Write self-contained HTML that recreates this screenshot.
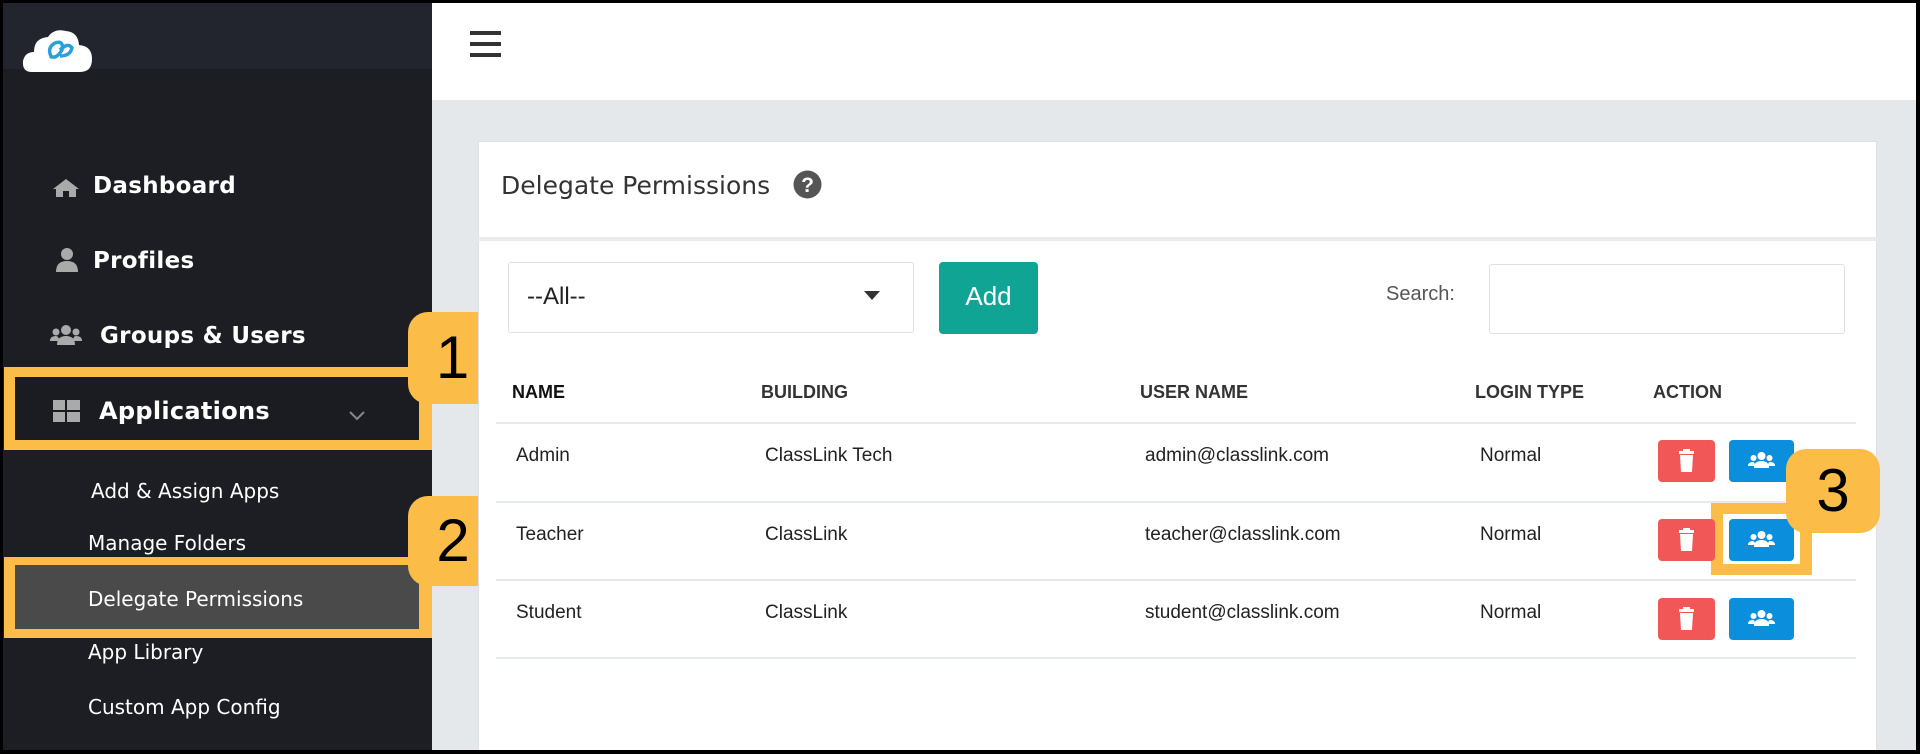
<!DOCTYPE html>
<html><head><meta charset="utf-8"><style>
*{margin:0;padding:0;box-sizing:border-box}
html,body{width:1920px;height:754px;overflow:hidden}
body{position:relative;background:#e5e8eb;font-family:"Liberation Sans",Arial,sans-serif}
.a{position:absolute}
.side{left:0;top:0;width:432px;height:754px;background:#1c1e24}
.logoarea{left:0;top:0;width:432px;height:69px;background:#22252d}
.nav{color:#fff;font-family:"DejaVu Sans","Liberation Sans",sans-serif;font-weight:bold;font-size:23px;letter-spacing:0.3px}
.sub{color:#fff;font-family:"DejaVu Sans","Liberation Sans",sans-serif;font-size:20px}
.th{font-weight:bold;font-size:18px;color:#333}
.td{font-size:19px;color:#222}
.line{height:2px;background:#e6e9ee;left:496px;width:1360px}
.badge{background:#fbbd47;border-radius:20px;font-size:60px;color:#000;text-align:center}
</style></head><body>
<div class="a side"></div>
<div class="a logoarea"></div>
<svg class="a" style="left:22px;top:26px" width="72" height="50" viewBox="0 0 72 50"><path d="M10 46 Q0 46 1 35 Q3 26 12 26 Q12 12 26 11 Q32 2 44 5 Q56 6 57 19 Q70 20 70 33 Q70 46 58 46 Z" fill="#fff"/><path d="M30 32 Q24 22 33 17 Q42 14 40 24 Q34 34 28 30 M38 24 Q46 16 50 22 Q48 30 38 30" stroke="#2aa0d8" stroke-width="3.5" fill="none"/></svg>
<div class="a" style="left:432px;top:0;width:1488px;height:100px;background:#fff"></div>
<div class="a" style="left:470px;top:31px;width:31px;height:4px;background:#333"></div>
<div class="a" style="left:470px;top:42px;width:31px;height:4px;background:#333"></div>
<div class="a" style="left:470px;top:53px;width:31px;height:4px;background:#333"></div>

<svg class="a" style="left:52px;top:178px" width="28" height="20" viewBox="0 0 28 20"><path d="M14 1 L1 11 L4 11 L4 19 L11 19 L11 13 L17 13 L17 19 L24 19 L24 11 L27 11 Z" fill="#aaa"/></svg>
<div class="a nav" style="left:93px;top:173px">Dashboard</div>
<svg class="a" style="left:55px;top:248px" width="24" height="24" viewBox="0 0 24 24"><circle cx="12" cy="6" r="6" fill="#aaa"/><path d="M1 24 Q1 13 12 13 Q23 13 23 24Z" fill="#aaa"/></svg>
<div class="a nav" style="left:93px;top:248px">Profiles</div>
<svg class="a" style="left:50px;top:325px" width="32" height="20" viewBox="0 0 32 20"><circle cx="16" cy="5" r="5" fill="#aaa"/><circle cx="6" cy="7" r="3.5" fill="#aaa"/><circle cx="26" cy="7" r="3.5" fill="#aaa"/><path d="M7 20 Q7 11 16 11 Q25 11 25 20Z M0 16 Q0 11 6 11 Q9 11 9 16Z M23 16 Q23 11 26 11 Q32 11 32 16Z" fill="#aaa"/></svg>
<div class="a nav" style="left:100px;top:323px">Groups &amp; Users</div>

<div class="a" style="left:4px;top:367px;width:428px;height:83px;background:#fbbd47"></div>
<div class="a" style="left:15px;top:377px;width:404px;height:63px;background:#1b1c21"></div>
<svg class="a" style="left:53px;top:400px" width="27" height="22" viewBox="0 0 27 22"><rect x="0" y="0" width="12" height="10" fill="#aaa"/><rect x="14" y="0" width="13" height="10" fill="#aaa"/><rect x="0" y="12" width="12" height="10" fill="#aaa"/><rect x="14" y="12" width="13" height="10" fill="#aaa"/></svg>
<div class="a nav" style="left:99px;top:397px;font-size:24px">Applications</div>
<svg class="a" style="left:349px;top:411px" width="16" height="10" viewBox="0 0 16 10"><path d="M1 1 L8 8 L15 1" stroke="#888" stroke-width="2" fill="none"/></svg>

<div class="a sub" style="left:91px;top:479px">Add &amp; Assign Apps</div>
<div class="a sub" style="left:88px;top:531px">Manage Folders</div>
<div class="a" style="left:4px;top:557px;width:428px;height:81px;background:#fbbd47"></div>
<div class="a" style="left:15px;top:565px;width:404px;height:64px;background:#4a4a4a"></div>
<div class="a sub" style="left:88px;top:587px">Delegate Permissions</div>
<div class="a sub" style="left:88px;top:640px">App Library</div>
<div class="a sub" style="left:88px;top:695px">Custom App Config</div>

<div class="a badge" style="left:408px;top:312px;width:89px;height:92px;line-height:92px">1</div>
<div class="a badge" style="left:408px;top:496px;width:90px;height:90px;line-height:90px">2</div>

<div class="a" style="left:478px;top:141px;width:1399px;height:613px;background:#fff;border:1px solid #dde1e5;border-bottom:none"></div>
<div class="a" style="left:501px;top:171px;color:#333;font-family:'DejaVu Sans','Liberation Sans',sans-serif;font-size:25px">Delegate Permissions</div>
<svg class="a" style="left:793px;top:170px" width="29" height="29" viewBox="0 0 29 29"><circle cx="14.5" cy="14.5" r="14" fill="#555"/><text x="14.5" y="22" text-anchor="middle" font-family="Liberation Sans" font-weight="bold" font-size="21" fill="#fff">?</text></svg>
<div class="a" style="left:478px;top:237px;width:1399px;height:4px;background:#ebebeb"></div>

<div class="a" style="left:508px;top:262px;width:406px;height:71px;border:1px solid #dde1e6;border-radius:3px"></div>
<div class="a" style="left:527px;top:283px;font-size:24px;color:#222">--All--</div>
<svg class="a" style="left:864px;top:291px" width="16" height="9" viewBox="0 0 16 9"><path d="M0 0 L16 0 L8 9Z" fill="#333"/></svg>
<div class="a" style="left:939px;top:262px;width:99px;height:72px;background:#0fa494;border-radius:4px;color:#fff;font-size:26px;text-align:center;line-height:68px">Add</div>
<div class="a" style="left:1386px;top:283px;font-size:20px;color:#555">Search:</div>
<div class="a" style="left:1489px;top:264px;width:356px;height:70px;border:1px solid #dde1e6;border-radius:3px"></div>

<div class="a th" style="left:512px;top:382px;color:#111">NAME</div>
<div class="a th" style="left:761px;top:382px">BUILDING</div>
<div class="a th" style="left:1140px;top:382px">USER NAME</div>
<div class="a th" style="left:1475px;top:382px">LOGIN TYPE</div>
<div class="a th" style="left:1653px;top:382px">ACTION</div>
<div class="a line" style="top:422px"></div>

<div class="a td" style="left:516px;top:445px">Admin</div>
<div class="a td" style="left:765px;top:445px">ClassLink Tech</div>
<div class="a td" style="left:1145px;top:445px">admin@classlink.com</div>
<div class="a td" style="left:1480px;top:445px">Normal</div>
<div class="a line" style="top:501px"></div>
<div class="a td" style="left:516px;top:524px">Teacher</div>
<div class="a td" style="left:765px;top:524px">ClassLink</div>
<div class="a td" style="left:1145px;top:524px">teacher@classlink.com</div>
<div class="a td" style="left:1480px;top:524px">Normal</div>
<div class="a line" style="top:579px"></div>
<div class="a td" style="left:516px;top:602px">Student</div>
<div class="a td" style="left:765px;top:602px">ClassLink</div>
<div class="a td" style="left:1145px;top:602px">student@classlink.com</div>
<div class="a td" style="left:1480px;top:602px">Normal</div>
<div class="a line" style="top:657px"></div>

<div class="a" style="left:1711px;top:503px;width:101px;height:72px;background:#fbbd47"></div>
<div class="a" style="left:1723px;top:514px;width:77px;height:50px;background:#fff"></div>
<svg class="a" style="left:0;top:0" width="1920" height="754" viewBox="0 0 1920 754">
<defs>
<g id="tr"><rect x="0" y="0" width="57" height="42" rx="4" fill="#f25757"/><rect x="21" y="11" width="15" height="3" fill="#fff"/><rect x="25" y="9" width="7" height="3" fill="#fff"/><path d="M22 15 L35 15 L34 32 L23 32Z" fill="#fff"/></g>
<g id="gr"><rect x="0" y="0" width="65" height="42" rx="4" fill="#0b8fdc"/><circle cx="32.5" cy="16" r="4" fill="#fff"/><circle cx="24.5" cy="18" r="3" fill="#fff"/><circle cx="40.5" cy="18" r="3" fill="#fff"/><path d="M25 28 Q25 21 32.5 21 Q40 21 40 28Z M19 26 Q19 22 24 22 Q26 22 26 26Z M39 26 Q39 22 41 22 Q46 22 46 26Z" fill="#fff"/></g>
</defs>
<use href="#tr" x="1658" y="440"/><use href="#gr" x="1729" y="440"/>
<use href="#tr" x="1658" y="519"/><use href="#gr" x="1729" y="519"/>
<use href="#tr" x="1658" y="598"/><use href="#gr" x="1729" y="598"/>
</svg>
<div class="a badge" style="left:1786px;top:449px;width:94px;height:84px;line-height:84px">3</div>

<div class="a" style="left:0;top:0;width:1920px;height:754px;border:3px solid #000;border-bottom-width:4px;border-right-width:4px"></div>
</body></html>
